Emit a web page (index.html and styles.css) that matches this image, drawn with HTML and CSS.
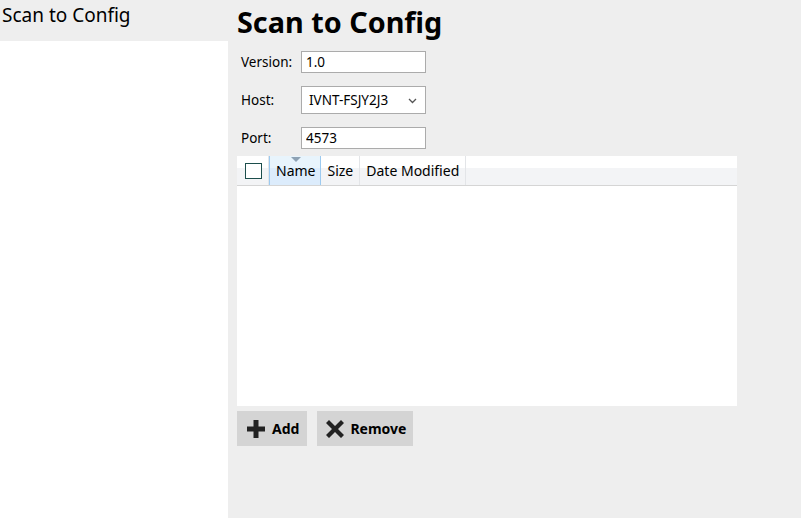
FILE: index.html
```html
<!DOCTYPE html>
<html lang="en">
<head>
  <meta charset="UTF-8" />
  <title>Scan to Config</title>
  <link rel="stylesheet" href="styles.css">
</head>
<body>
  <aside class="sidebar">
    <div class="side-head">Scan to Config</div>
    <div class="side-list"></div>
  </aside>

  <main class="content">
    <h1>Scan to Config</h1>

    <div class="form">
      <div class="row">
        <label>Version:</label>
        <input class="field" type="text" value="1.0">
      </div>
      <div class="row">
        <label>Host:</label>
        <div class="select">
          <span>IVNT-FSJY2J3</span>
          <svg class="chev" width="9" height="6" viewBox="0 0 9 6"><path d="M1 1 L4.5 4.5 L8 1" fill="none" stroke="#555" stroke-width="1.3"/></svg>
        </div>
      </div>
      <div class="row">
        <label>Port:</label>
        <input class="field" type="text" value="4573">
      </div>
    </div>

    <div class="table">
      <div class="thead">
        <div class="th th-check"><span class="checkbox"></span></div>
        <div class="th sorted">Name<span class="sort-arrow"></span></div>
        <div class="th">Size</div>
        <div class="th">Date Modified</div>
        <div class="th th-fill"></div>
      </div>
      <div class="tbody"></div>
    </div>

    <div class="buttons">
      <button class="btn">
        <svg width="20" height="20" viewBox="0 0 20 20"><path d="M7.5 1h5v6.5H19v5h-6.5V19h-5v-6.5H1v-5h6.5z" fill="#222"/></svg>
        Add
      </button>
      <button class="btn btn-remove">
        <svg width="20" height="20" viewBox="0 0 20 20"><path d="M4 1l6 6 6-6 3 3-6 6 6 6-3 3-6-6-6 6-3-3 6-6-6-6z" fill="#222"/></svg>
        Remove
      </button>
    </div>
  </main>
</body>
</html>
```
FILE: styles.css
```css
body {
  margin: 0;
  font-family: 'Noto Sans', 'Open Sans', sans-serif;
  background: #eeeeee;
  color: #000;
  display: flex;
  height: 518px;
  overflow: hidden;
}
.sidebar {
  width: 228px;
  display: flex;
  flex-direction: column;
}
.side-head {
  height: 41px;
  font-size: 19px;
  padding: 3px 0 0 2px;
  box-sizing: border-box;
  line-height: 24px;
}
.side-list {
  flex: 1;
  background: #fff;
}
.content {
  padding: 0 0 0 9px;
  width: 500px;
}
h1 {
  font-size: 28.8px;
  font-weight: bold;
  margin: 3px 0 0 0;
  line-height: 38px;
}
.form {
  margin-top: 10px;
}
.row {
  display: flex;
  align-items: center;
  margin-bottom: 13px;
  font-size: 13.5px;
}
.row label {
  width: 60px;
  padding-left: 4px;
}
.field {
  width: 125px;
  height: 22px;
  box-sizing: border-box;
  border: 1px solid #ababab;
  font-family: inherit;
  font-size: 13.5px;
  padding: 0 4px;
  margin: 0;
  background: #fff;
  outline: none;
}
.select {
  width: 125px;
  height: 28px;
  box-sizing: border-box;
  border: 1px solid #ababab;
  background: #fff;
  display: flex;
  align-items: center;
  justify-content: space-between;
  padding: 0 8px 0 7px;
}
.chev {
  margin-top: 1px;
}
.table {
  width: 500px;
  margin-top: -6px;
  background: #fff;
}
.thead {
  display: flex;
  height: 29px;
  border-bottom: 1px solid #d5d5d5;
  background: linear-gradient(#ffffff 0%, #ffffff 40%, #f3f4f6 41%, #f3f4f6 100%);
  font-size: 14px;
}
.th {
  display: flex;
  align-items: center;
  padding: 0 6px;
  border-right: 1px solid #e3e5e8;
  position: relative;
}
.th-check {
  width: 23px;
  padding: 0 0 0 8px;
}
.checkbox {
  width: 15px;
  height: 14px;
  border: 1px solid #1c4e4c;
  background: #fff;
}
.sorted {
  background: linear-gradient(#e8f4fc 0%, #e8f4fc 40%, #dcecfc 41%, #dcecfc 100%);
  border-left: 1px solid #9ccaf0;
  border-right: 1px solid #9ccaf0;
  padding: 0 5px 0 6px;
}
.sort-arrow {
  position: absolute;
  top: 1px;
  left: 21px;
  width: 0;
  height: 0;
  border-left: 5px solid transparent;
  border-right: 5px solid transparent;
  border-top: 5px solid #8ea2b4;
}
.th-fill {
  flex: 1;
  border-right: none;
}
.tbody {
  height: 220px;
}
.buttons {
  display: flex;
  gap: 10px;
  margin-top: 5px;
}
.btn {
  display: flex;
  align-items: center;
  gap: 6px;
  height: 35px;
  padding: 0 8px 0 9px;
  border: none;
  background: #d4d4d4;
  font-family: inherit;
  font-size: 14px;
  font-weight: bold;
  color: #000;
}
.btn-remove {
  padding: 0 7px 0 8px;
  gap: 5px;
}
```
